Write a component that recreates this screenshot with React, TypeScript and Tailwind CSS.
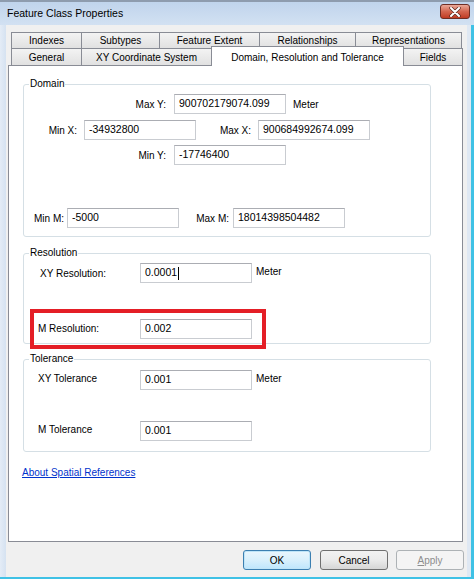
import React from "react";

function TextBox({ value, cursor }: { value: string; cursor?: boolean }) {
  return (
    <div className="w-[112px] h-[20px] shrink-0 bg-white border border-[#c9ccd1] border-t-[#abadb3] flex items-center pl-[4px] text-[10.5px] text-black">
      <span>{value}</span>
      {cursor && <span className="inline-block w-px h-[13px] bg-black ml-[1px]" />}
    </div>
  );
}

function Tab({ label, w, selected }: { label: string; w: string; selected?: boolean }) {
  return (
    <div
      className={
        selected
          ? `${w} h-[20px] -ml-px mb-[-1px] relative z-10 bg-white border border-b-0 border-[#898c95] flex items-start justify-center pt-[3px]`
          : `${w} h-full -ml-px first:ml-0 bg-gradient-to-b from-[#f3f3f3] to-[#e1e1e1] border border-b-0 border-[#898c95] flex items-center justify-center`
      }
    >
      {label}
    </div>
  );
}

function Button({ label, kind }: { label: string; kind?: "default" | "disabled" }) {
  const base = "w-[68px] h-[20px] rounded-[3px] flex items-center justify-center";
  if (kind === "default")
    return (
      <div className={`${base} border border-[#3c7fb1] bg-gradient-to-b from-[#eaf6fd] via-[#d9f0fc] to-[#bee6fd] shadow-[inset_0_0_0_1px_#bfe5f8]`}>
        {label}
      </div>
    );
  if (kind === "disabled")
    return (
      <div className={`${base} border border-[#adb2b5] bg-[#f4f4f4] text-[#8d8d8d]`}>
        <span>
          <span className="underline">A</span>pply
        </span>
      </div>
    );
  return (
    <div className={`${base} border border-[#707070] bg-gradient-to-b from-[#f2f2f2] via-[#ebebeb] to-[#d6d6d6]`}>
      {label}
    </div>
  );
}

function Group({ title, className, children }: { title: string; className?: string; children: React.ReactNode }) {
  return (
    <fieldset className={`w-[408px] border border-[#d5dfe5] rounded-[3px] ${className ?? ""}`}>
      <legend className="ml-[5px] px-[1px] leading-[12px]">{title}</legend>
      {children}
    </fieldset>
  );
}

export default function App() {
  return (
    <div className="w-[474px] h-[579px] flex flex-col bg-[#d6e3f2] font-['Liberation_Sans',Arial,sans-serif] text-[10px] text-black overflow-hidden">
      {/* Title bar */}
      <div className="h-[25px] shrink-0 flex items-start justify-between pl-[7px] pr-[4px] bg-gradient-to-b from-[#c0d4ec] to-[#d2e1f2] border-t-2 border-[#8e9cae]">
        <div className="text-[10.5px] text-black mt-[4px]">Feature Class Properties</div>
        <div className="mt-[2px] w-[30px] h-[15px] rounded-[3px] border border-[#6e2e25] bg-gradient-to-b from-[#e9a898] via-[#d3654f] to-[#c03a22] flex items-center justify-center">
          <svg width="12" height="10" viewBox="0 0 12 10">
            <path d="M2 1 L10 9 M10 1 L2 9" stroke="#5a2a22" strokeWidth="3.4" strokeLinecap="round" />
            <path d="M2 1 L10 9 M10 1 L2 9" stroke="#ffffff" strokeWidth="2" strokeLinecap="round" />
          </svg>
        </div>
      </div>

      {/* Middle */}
      <div className="flex-1 flex">
        <div className="w-[6px] bg-gradient-to-r from-[#e4ecf6] to-[#d5e2f1]" />
        <div className="w-[461px] bg-[#f0f0f0] flex flex-col pl-[2px]">
          {/* Tabs */}
          <div className="pl-[3px] pt-[7px] flex flex-col">
            <div className="flex h-[16px]">
              <Tab label="Indexes" w="w-[71px]" />
              <Tab label="Subtypes" w="w-[79px]" />
              <Tab label="Feature Extent" w="w-[101px]" />
              <Tab label="Relationships" w="w-[97px]" />
              <Tab label="Representations" w="w-[107px]" />
            </div>
            <div className="flex h-[17px] items-end">
              <Tab label="General" w="w-[71px]" />
              <Tab label="XY Coordinate System" w="w-[131px]" />
              <Tab label="Domain, Resolution and Tolerance" w="w-[193px]" selected />
              <Tab label="Fields" w="w-[60px]" />
            </div>
          </div>

          {/* Panel */}
          <div className="w-[455px] h-[477px] bg-white border border-[#898c95] flex flex-col pl-[14px]">
            <Group title="Domain" className="mt-[12px] pb-[8px]">
              <div className="mt-[4px] h-[20px] flex items-center">
                <div className="w-[142px] text-right">Max Y:</div>
                <div className="ml-[8px]"><TextBox value="900702179074.099" /></div>
                <div className="ml-[7px]">Meter</div>
              </div>
              <div className="mt-[6px] h-[20px] flex items-center">
                <div className="w-[53px] text-right">Min X:</div>
                <div className="ml-[7px]"><TextBox value="-34932800" /></div>
                <div className="w-[55px] text-right">Max X:</div>
                <div className="ml-[7px]"><TextBox value="900684992674.099" /></div>
              </div>
              <div className="mt-[5px] h-[20px] flex items-center">
                <div className="w-[142px] text-right">Min Y:</div>
                <div className="ml-[8px]"><TextBox value="-17746400" /></div>
              </div>
              <div className="mt-[43px] h-[20px] flex items-center">
                <div className="w-[40px] text-right">Min M:</div>
                <div className="ml-[3px]"><TextBox value="-5000" /></div>
                <div className="w-[50px] text-right">Max M:</div>
                <div className="ml-[4px]"><TextBox value="18014398504482" /></div>
              </div>
            </Group>

            <Group title="Resolution" className="mt-[10px]">
              <div className="mt-[4px] h-[20px] flex items-center pl-[16px]">
                <div className="w-[100px]">XY Resolution:</div>
                <TextBox value="0.0001" cursor />
                <div className="ml-[4px] -mt-[3px]">Meter</div>
              </div>
              <div className="mt-[26px] mb-[-6px] ml-[6px] w-[236px] h-[40px] border-4 border-[#e41e26] flex items-center pl-[4px] relative">
                <div className="w-[102px] -mt-[2px]">M Resolution:</div>
                <TextBox value="0.002" />
              </div>
            </Group>

            <Group title="Tolerance" className="mt-[9px] pb-[10px]">
              <div className="mt-[5px] h-[20px] flex items-center pl-[14px]">
                <div className="w-[102px] -mt-[3px]">XY Tolerance</div>
                <TextBox value="0.001" />
                <div className="ml-[4px] -mt-[3px]">Meter</div>
              </div>
              <div className="mt-[31px] h-[20px] flex items-center pl-[14px]">
                <div className="w-[102px] -mt-[3px]">M Tolerance</div>
                <TextBox value="0.001" />
              </div>
            </Group>

            <div className="mt-[15px] -ml-px leading-[12px]">
              <span className="text-[#0033cc] underline">About Spatial References</span>
            </div>
          </div>

          {/* Buttons */}
          <div className="mt-[8px] flex justify-end pr-[3px] gap-[8px]">
            <Button label="OK" kind="default" />
            <div className="ml-[1px]"><Button label="Cancel" /></div>
            <Button label="Apply" kind="disabled" />
          </div>
        </div>
        <div className="w-[4px] bg-[#dfe8f3]" />
        <div className="w-[3px] bg-[#3fc1e5]" />
      </div>
      <div className="h-[2px] shrink-0 bg-[#3fc1e5]" />
    </div>
  );
}
